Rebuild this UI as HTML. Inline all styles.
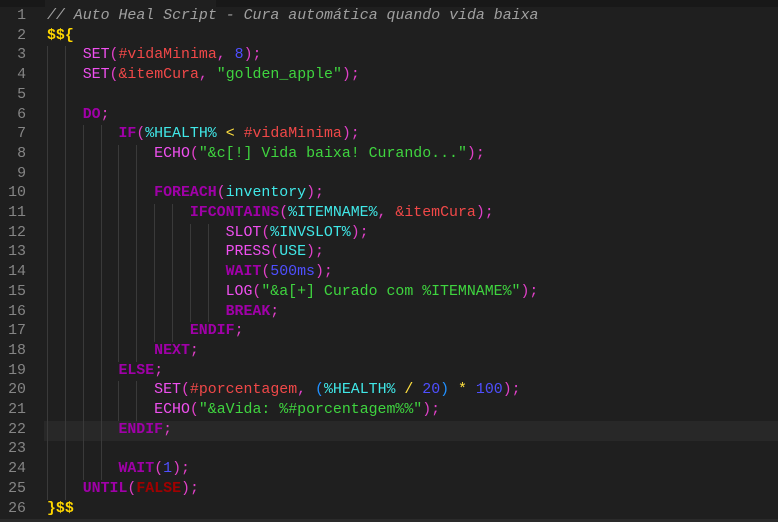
<!DOCTYPE html>
<html><head><meta charset="utf-8"><style>
html,body{margin:0;padding:0;width:778px;height:522px;overflow:hidden;background:#1f1f1f;}
.top{position:absolute;left:0;top:0;width:778px;height:7px;background:#181818;}
.tab{position:absolute;left:45px;top:0;width:171px;height:7px;background:#1f1f1f;}
.hl{position:absolute;left:44px;top:421px;width:734px;height:20px;background:#282828;}
.bot{position:absolute;left:0;top:519px;width:778px;height:3px;background:#2a2a2a;}
.ln{position:absolute;left:0;top:7px;width:26px;text-align:right;font:14.9px/19.7px "Liberation Mono",monospace;color:#858585;}
.code{position:absolute;left:47px;top:7px;font:14.9px/19.7px "Liberation Mono",monospace;color:#d4d4d4;white-space:pre;}
.g{display:inline-block;width:2ch;height:19.7px;vertical-align:top;box-shadow:inset 1px 0 0 #3a3a3a;}
.c{color:#a0a0a0;font-style:italic}
.y{color:#ffd700;font-weight:bold}
.f{color:#f050f0}
.k{color:#a000a8;font-weight:bold}
.v{color:#f04848}
.n{color:#4f4fff}
.s{color:#3fd43f}
.h{color:#40e8e8}
.p{color:#e040c8}
.pb{color:#2090ff}
.o{color:#ffe040}
.r{color:#a00000;font-weight:bold}
</style></head><body>
<div class="top"></div><div class="tab"></div><div class="hl"></div><div class="bot"></div>
<div class="ln">1<br>2<br>3<br>4<br>5<br>6<br>7<br>8<br>9<br>10<br>11<br>12<br>13<br>14<br>15<br>16<br>17<br>18<br>19<br>20<br>21<br>22<br>23<br>24<br>25<br>26</div>
<div class="code"><span class="c">// Auto Heal Script - Cura automática quando vida baixa</span>
<span class="y">$${</span>
<span class="g"></span><span class="g"></span><span class="f">SET</span><span class="p">(</span><span class="v">#vidaMinima</span><span class="p">, </span><span class="n">8</span><span class="p">);</span>
<span class="g"></span><span class="g"></span><span class="f">SET</span><span class="p">(</span><span class="v">&amp;itemCura</span><span class="p">, </span><span class="s">"golden_apple"</span><span class="p">);</span>
<span class="g"></span><span class="g"></span>
<span class="g"></span><span class="g"></span><span class="k">DO</span><span class="p">;</span>
<span class="g"></span><span class="g"></span><span class="g"></span><span class="g"></span><span class="k">IF</span><span class="p">(</span><span class="h">%HEALTH%</span> <span class="o">&lt;</span> <span class="v">#vidaMinima</span><span class="p">);</span>
<span class="g"></span><span class="g"></span><span class="g"></span><span class="g"></span><span class="g"></span><span class="g"></span><span class="f">ECHO</span><span class="p">(</span><span class="s">"&amp;c[!] Vida baixa! Curando..."</span><span class="p">);</span>
<span class="g"></span><span class="g"></span><span class="g"></span><span class="g"></span><span class="g"></span><span class="g"></span>
<span class="g"></span><span class="g"></span><span class="g"></span><span class="g"></span><span class="g"></span><span class="g"></span><span class="k">FOREACH</span><span class="p">(</span><span class="h">inventory</span><span class="p">);</span>
<span class="g"></span><span class="g"></span><span class="g"></span><span class="g"></span><span class="g"></span><span class="g"></span><span class="g"></span><span class="g"></span><span class="k">IFCONTAINS</span><span class="p">(</span><span class="h">%ITEMNAME%</span><span class="p">, </span><span class="v">&amp;itemCura</span><span class="p">);</span>
<span class="g"></span><span class="g"></span><span class="g"></span><span class="g"></span><span class="g"></span><span class="g"></span><span class="g"></span><span class="g"></span><span class="g"></span><span class="g"></span><span class="f">SLOT</span><span class="p">(</span><span class="h">%INVSLOT%</span><span class="p">);</span>
<span class="g"></span><span class="g"></span><span class="g"></span><span class="g"></span><span class="g"></span><span class="g"></span><span class="g"></span><span class="g"></span><span class="g"></span><span class="g"></span><span class="f">PRESS</span><span class="p">(</span><span class="h">USE</span><span class="p">);</span>
<span class="g"></span><span class="g"></span><span class="g"></span><span class="g"></span><span class="g"></span><span class="g"></span><span class="g"></span><span class="g"></span><span class="g"></span><span class="g"></span><span class="k">WAIT</span><span class="p">(</span><span class="n">500ms</span><span class="p">);</span>
<span class="g"></span><span class="g"></span><span class="g"></span><span class="g"></span><span class="g"></span><span class="g"></span><span class="g"></span><span class="g"></span><span class="g"></span><span class="g"></span><span class="f">LOG</span><span class="p">(</span><span class="s">"&amp;a[+] Curado com %ITEMNAME%"</span><span class="p">);</span>
<span class="g"></span><span class="g"></span><span class="g"></span><span class="g"></span><span class="g"></span><span class="g"></span><span class="g"></span><span class="g"></span><span class="g"></span><span class="g"></span><span class="k">BREAK</span><span class="p">;</span>
<span class="g"></span><span class="g"></span><span class="g"></span><span class="g"></span><span class="g"></span><span class="g"></span><span class="g"></span><span class="g"></span><span class="k">ENDIF</span><span class="p">;</span>
<span class="g"></span><span class="g"></span><span class="g"></span><span class="g"></span><span class="g"></span><span class="g"></span><span class="k">NEXT</span><span class="p">;</span>
<span class="g"></span><span class="g"></span><span class="g"></span><span class="g"></span><span class="k">ELSE</span><span class="p">;</span>
<span class="g"></span><span class="g"></span><span class="g"></span><span class="g"></span><span class="g"></span><span class="g"></span><span class="f">SET</span><span class="p">(</span><span class="v">#porcentagem</span><span class="p">, </span><span class="pb">(</span><span class="h">%HEALTH%</span> <span class="o">/</span> <span class="n">20</span><span class="pb">)</span> <span class="o">*</span> <span class="n">100</span><span class="p">);</span>
<span class="g"></span><span class="g"></span><span class="g"></span><span class="g"></span><span class="g"></span><span class="g"></span><span class="f">ECHO</span><span class="p">(</span><span class="s">"&amp;aVida: %#porcentagem%%"</span><span class="p">);</span>
<span class="g"></span><span class="g"></span><span class="g"></span><span class="g"></span><span class="k">ENDIF</span><span class="p">;</span>
<span class="g"></span><span class="g"></span><span class="g"></span><span class="g"></span>
<span class="g"></span><span class="g"></span><span class="g"></span><span class="g"></span><span class="k">WAIT</span><span class="p">(</span><span class="n">1</span><span class="p">);</span>
<span class="g"></span><span class="g"></span><span class="k">UNTIL</span><span class="p">(</span><span class="r">FALSE</span><span class="p">);</span>
<span class="y">}$$</span></div>
</body></html>
